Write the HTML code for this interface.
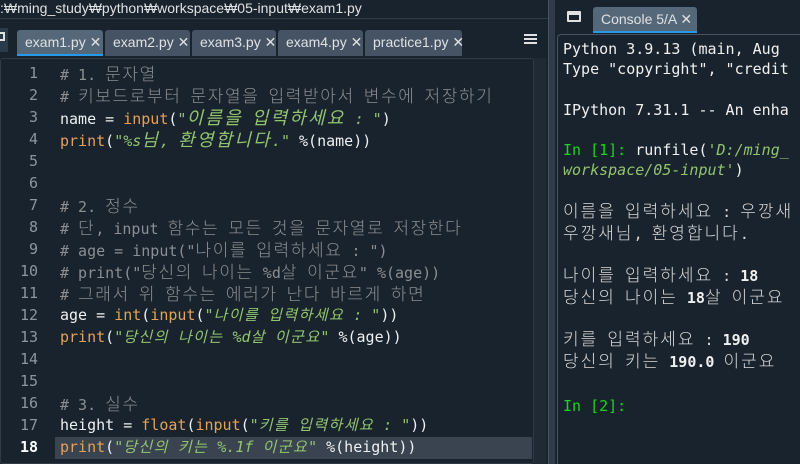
<!DOCTYPE html>
<html><head><meta charset="utf-8"><style>
*{margin:0;padding:0;box-sizing:border-box}
body{width:800px;height:464px;background:#19232d;overflow:hidden;position:relative;font-family:"DejaVu Sans Mono","Liberation Mono","Noto Sans CJK KR",monospace;}
.abs{position:absolute}
.title{left:0;top:0;width:548px;height:19px;font:14px "Liberation Sans","Noto Sans CJK KR",sans-serif;color:#e0e1e3;line-height:17px;border-bottom:1px solid #2f3b47;white-space:nowrap;overflow:hidden}
.tab{top:30px;height:26px;background:#455364;color:#dfe1e2;font:14px "Liberation Sans",sans-serif;line-height:25px;padding-left:8px;border-radius:3px 3px 0 0;white-space:nowrap}
.tab.act{background:#54687a;border-bottom:2px solid #259ae9}
.code{left:0;top:58px;width:534px;height:406px;background:#19232d;border:1px solid #2f3b47;border-radius:3px}
.ln{position:absolute;left:0;width:38px;text-align:right;color:#8a96a0;font-size:15px;line-height:22px}
.cl{position:absolute;left:60px;font-size:15px;line-height:22px;color:#eef0f1;white-space:pre}
.c{color:#8b8f93}.k{color:#e3a15a}.s{color:#92c46f;font-style:italic}
.h{letter-spacing:1.4px;font-family:"Noto Sans CJK KR",sans-serif}
.c .h{font-size:17px;letter-spacing:1.6px;font-weight:300}
.h3{font-size:18px;letter-spacing:2.2px;font-family:"Noto Sans CJK KR",sans-serif}
.con{left:557px;top:34px;width:243px;height:430px;border:1px solid #455364;border-right:none;border-bottom:none;border-radius:4px 0 0 0}
.cx{position:absolute;left:563px;font-size:15px;line-height:20px;color:#f0f0f0;white-space:pre}
.g{color:#1fd31f}.cs{color:#92c46f;font-style:italic}
.kr{color:#d8d8d8}
.q{font-family:"Noto Sans CJK KR",sans-serif;font-weight:300;font-size:17px;letter-spacing:2px}
</style></head><body>
<div class="abs title">:₩ming_study₩python₩workspace₩05-input₩exam1.py</div>
<div class="abs" style="left:-6px;top:28px;width:14px;height:24px;background:#2b3a48"></div>
<div class="abs" style="left:-4px;top:32px;width:9px;height:9px;border:2px solid #dfe1e2"></div>
<div class="abs tab act" style="left:17px;width:86px">exam1.py ✕</div>
<div class="abs tab" style="left:105px;width:85px">exam2.py ✕</div>
<div class="abs tab" style="left:192px;width:84px">exam3.py ✕</div>
<div class="abs tab" style="left:278px;width:85px">exam4.py ✕</div>
<div class="abs tab" style="left:365px;width:97px">practice1.py ✕</div>
<div class="abs" style="left:524px;top:34px;width:13px;height:2px;background:#dfe1e2;box-shadow:0 4px 0 #dfe1e2,0 8px 0 #dfe1e2"></div>
<div class="abs code"></div>
<div class="abs" style="left:534px;top:58px;width:12px;height:406px;background:#1f2a35"></div>
<div class="abs" style="left:548px;top:0;width:7px;height:464px;background:#2f3b47;border-left:1px solid #455364"></div>
<div class="abs" style="left:55px;top:437px;width:477px;height:22px;background:#3a4450"></div>
<div class="ln" style="top:62px">1</div><div class="ln" style="top:84px">2</div><div class="ln" style="top:106px">3</div><div class="ln" style="top:128px">4</div><div class="ln" style="top:150px">5</div><div class="ln" style="top:172px">6</div><div class="ln" style="top:194px">7</div><div class="ln" style="top:216px">8</div><div class="ln" style="top:238px">9</div><div class="ln" style="top:260px">10</div><div class="ln" style="top:282px">11</div><div class="ln" style="top:304px">12</div><div class="ln" style="top:326px">13</div><div class="ln" style="top:348px">14</div><div class="ln" style="top:370px">15</div><div class="ln" style="top:392px">16</div><div class="ln" style="top:414px">17</div><div class="ln" style="top:436px;color:#fff;font-weight:bold">18</div>
<div class="cl c" style="top:62px"># 1. <span class="h">문자열</span></div>
<div class="cl c" style="top:84px"># <span class="h">키보드로부터</span> <span class="h">문자열을</span> <span class="h">입력받아서</span> <span class="h">변수에</span> <span class="h">저장하기</span></div>
<div class="cl" style="top:106px">name = <span class="k">input</span>(<span class="s">"<span class="h3">이름을</span> <span class="h3">입력하세요</span> : "</span>)</div>
<div class="cl" style="top:128px"><span class="k">print</span>(<span class="s">"%s<span class="h3">님</span>, <span class="h3">환영합니다</span>."</span> %(name))</div>
<div class="cl c" style="top:194px"># 2. <span class="h">정수</span></div>
<div class="cl c" style="top:216px"># <span class="h">단</span>, input <span class="h">함수는</span> <span class="h">모든</span> <span class="h">것을</span> <span class="h">문자열로</span> <span class="h">저장한다</span></div>
<div class="cl c" style="top:238px"># age = input("<span class="h">나이를</span> <span class="h">입력하세요</span> : ")</div>
<div class="cl c" style="top:260px"># print("<span class="h">당신의</span> <span class="h">나이는</span> %d<span class="h">살</span> <span class="h">이군요</span>" %(age))</div>
<div class="cl c" style="top:282px"># <span class="h">그래서</span> <span class="h">위</span> <span class="h">함수는</span> <span class="h">에러가</span> <span class="h">난다</span> <span class="h">바르게</span> <span class="h">하면</span></div>
<div class="cl" style="top:304px">age = <span class="k">int</span>(<span class="k">input</span>(<span class="s">"<span class="h">나이를</span> <span class="h">입력하세요</span> : "</span>))</div>
<div class="cl" style="top:326px"><span class="k">print</span>(<span class="s">"<span class="h">당신의</span> <span class="h">나이는</span> %d<span class="h">살</span> <span class="h">이군요</span>"</span> %(age))</div>
<div class="cl c" style="top:392px"># 3. <span class="h">실수</span></div>
<div class="cl" style="top:414px">height = <span class="k">float</span>(<span class="k">input</span>(<span class="s">"<span class="h">키를</span> <span class="h">입력하세요</span> : "</span>))</div>
<div class="cl" style="top:436px"><span class="k">print</span>(<span class="s">"<span class="h">당신의</span> <span class="h">키는</span> %.1f <span class="h">이군요</span>"</span> %(height))</div>

<div class="abs" style="left:567px;top:11px;width:14px;height:11px;border:2px solid #dfe1e2;border-top-width:4px;border-radius:1px"></div>
<div class="abs tab act" style="left:593px;top:7px;width:104px;height:26px;line-height:24px;font-size:14px">Console 5/A ✕</div>
<div class="abs con"></div>
<div class="cx" style="top:39px">Python 3.9.13 (main, Aug</div>
<div class="cx" style="top:59px">Type "copyright", "credit</div>
<div class="cx" style="top:100px">IPython 7.31.1 -- An enha</div>
<div class="cx" style="top:140px"><span class="g">In [1]:</span> runfile(<span class="cs">'D:/ming_</span></div>
<div class="cx" style="top:160px"><span class="cs">workspace/05-input'</span>)</div>
<div class="cx kr" style="top:200px"><span class="q">이름을</span> <span class="q">입력하세요</span> : <span class="q">우깡새</span></div>
<div class="cx kr" style="top:222px"><span class="q">우깡새님</span>, <span class="q">환영합니다</span>.</div>
<div class="cx kr" style="top:264px"><span class="q">나이를</span> <span class="q">입력하세요</span> : <b style="color:#f0f0f0">18</b></div>
<div class="cx kr" style="top:286px"><span class="q">당신의</span> <span class="q">나이는</span> <b style="color:#f0f0f0">18</b><span class="q">살</span> <span class="q">이군요</span></div>
<div class="cx kr" style="top:328px"><span class="q">키를</span> <span class="q">입력하세요</span> : <b style="color:#f0f0f0">190</b></div>
<div class="cx kr" style="top:350px"><span class="q">당신의</span> <span class="q">키는</span> <b style="color:#f0f0f0">190.0</b> <span class="q">이군요</span></div>
<div class="cx g" style="top:396px">In [2]:</div>
</body></html>
